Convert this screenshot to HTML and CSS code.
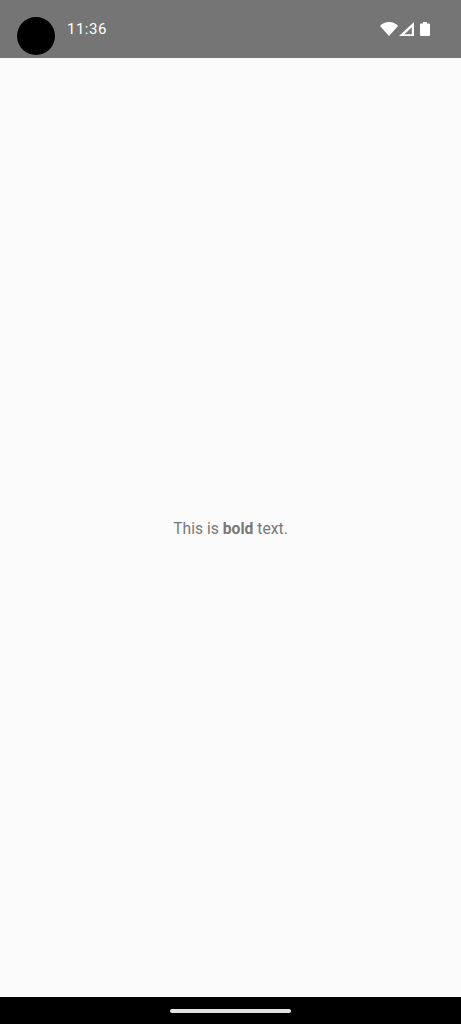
FILE: index.html
```html
<!DOCTYPE html>
<html>

<head>
    <link rel="stylesheet" href="styles.css">
</head>

<body>

    <div id="status-bar">
        <div id="camera"></div>
        <div id="clock">11:36</div>
        <div id="status-icons">
            <svg class="wifi" width="18" height="14" viewBox="0 0 18 14">
                <path d="M0 4C2.300 1.500 5.400 0 9 0s6.700 1.500 9 4L9 14z" fill="#ffffff" />
            </svg>
            <svg class="signal" width="15" height="14" viewBox="0 0 15 14">
                <path fill-rule="evenodd" d="M0 14L15 0v14zM5.500 12.200h7.300V5.200z" fill="#ffffff" />
            </svg>
            <svg class="battery" width="10" height="14" viewBox="0 0 10 14">
                <path d="M3 0h4v1.500h2a1 1 0 0 1 1 1V13a1 1 0 0 1-1 1H1a1 1 0 0 1-1-1V2.500a1 1 0 0 1 1-1h2z" fill="#ffffff" />
            </svg>
        </div>
    </div>

    <div id="content">
        <p class="message">This is <b>bold</b> text.</p>
    </div>

    <div id="nav-bar">
        <div id="nav-handle"></div>
    </div>

</body>

</html>
```
FILE: styles.css
```css
body {
    font-family: Roboto, sans-serif;
    background-color: #fbfbfb;
    display: flex;
    flex-direction: column;
    height: 1024px;
    margin: 0;
    overflow: hidden;
}

#status-bar {
    height: 58px;
    flex-shrink: 0;
    background-color: #757575;
    display: flex;
    align-items: center;
    padding: 0 31px 0 17px;
    box-sizing: border-box;
    color: #ffffff;
}

#camera {
    width: 38px;
    height: 38px;
    margin-top: 13px;
    border-radius: 50%;
    background-color: #000000;
}

#clock {
    margin-left: 12px;
    font-size: 15px;
    letter-spacing: 0.5px;
}

#status-icons {
    margin-left: auto;
    display: flex;
    align-items: center;
}

.wifi {
    margin-right: 1px;
}

.signal {
    margin-right: 6px;
}

#content {
    flex-grow: 1;
    display: flex;
    align-items: center;
    justify-content: center;
}

.message {
    margin: 2px 0 0;
    font-size: 15.7px;
    color: #787878;
}

#nav-bar {
    height: 27px;
    flex-shrink: 0;
    background-color: #000000;
    display: flex;
    justify-content: center;
    padding-top: 12px;
    box-sizing: border-box;
}

#nav-handle {
    width: 121px;
    height: 4px;
    border-radius: 2px;
    background-color: #e4e4e4;
}
```
